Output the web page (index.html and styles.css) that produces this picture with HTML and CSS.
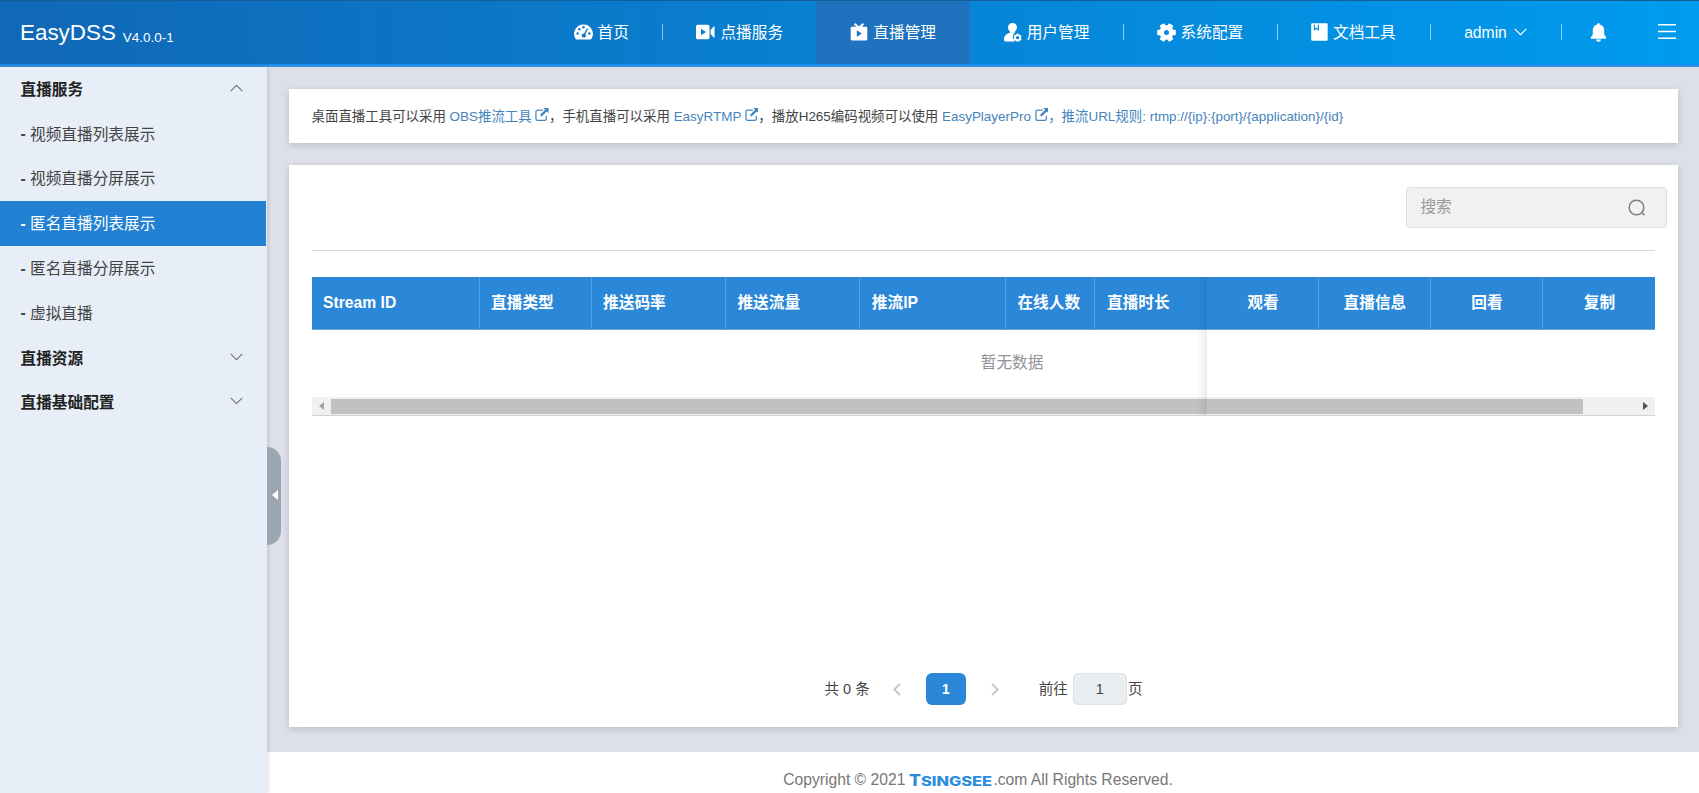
FILE: index.html
```html
<!DOCTYPE html>
<html lang="zh-CN">
    <head>
        <meta charset="utf-8">
        <title>EasyDSS</title>
        <link rel="stylesheet" href="styles.css">
    </head>

    <body>
        <div class="header">
            <div class="logo">EasyDSS<span class="logo__version">V4.0.0-1</span></div>
            <div class="nav">
                <a class="nav__item nav__item_home" href="#">
                    <svg class="icon" width="19" height="18" viewBox="0 0 19 18"><path fill="#fff" d="M9.500 1.500A9.300 9.300 0 0 0 2.100 16.500h14.800A9.300 9.300 0 0 0 9.500 1.500z"/><g fill="#0b7acd"><circle cx="3.600" cy="10.500" r="1.200"/><circle cx="5.300" cy="6.200" r="1.200"/><circle cx="9.500" cy="4.300" r="1.200"/><circle cx="15.400" cy="10.500" r="1.200"/><path d="M12.900 5.300l1.100.7-2.600 5.100a2.100 2.100 0 1 1-1.300-.7z"/></g></svg>
                    <span>首页</span>
                </a>
                <a class="nav__item" href="#">
                    <svg class="icon" width="19" height="18" viewBox="0 0 19 18"><path fill="#fff" d="M1.500 1.800h10.500q1.500 0 1.500 1.500v11.500q0 1.500-1.500 1.500H1.500q-1.500 0-1.500-1.500V3.300q0-1.500 1.500-1.500zM14.500 7l4-4.300v12.600l-4-4.300z"/><path fill="#0a7ed0" d="M5 5.800l5 3.200-5 3.200z"/></svg>
                    <span>点播服务</span>
                </a>
                <a class="nav__item nav__item_active" href="#">
                    <svg class="icon" width="18" height="18" viewBox="0 0 18 18"><path fill="none" stroke="#fff" stroke-width="2" d="M4.500.8l4.500 4 4.500-4"/><path fill="#fff" d="M2 3.800h14q1.300 0 1.300 1.300v11q0 1.300-1.300 1.300H2Q.700 17.400.700 16.100v-11Q.700 3.800 2 3.800z"/><path fill="#1f73be" d="M6.800 7.200l5 3.400-5 3.400z"/></svg>
                    <span>直播管理</span>
                </a>
                <a class="nav__item" href="#">
                    <svg class="icon" width="18" height="19" viewBox="0 0 18 19"><path fill="#fff" d="M8.500 0c3 0 4.700 2.300 4.400 5-.2 1.600-1.200 2.700-2 3.700v1.200c-1.800 1-2.300 2.600-2 4.500.2 1.400 1 2.800 2 4H1.500Q0 18.400 0 17c0-3.600 1.400-5.600 6-7.200V8.600C4.800 7.500 4 6.300 4 4.600 4 2 5.700 0 8.500 0z"/><circle cx="13.600" cy="14.700" r="2.600" fill="none" stroke="#fff" stroke-width="1.900"/><path stroke="#fff" stroke-width="1.600" d="M13.600 10.600v1.500M13.600 17.300v1.500M10 12.600l1.400.8M15.800 16l1.400.8M17.200 12.600l-1.400.8M11.400 16l-1.400.8"/></svg>
                    <span>用户管理</span>
                </a>
                <a class="nav__item nav__item_line" href="#">
                    <svg class="icon" width="19" height="19" viewBox="-9.500 -9.500 19 19"><g fill="#fff"><circle r="7.200"/><rect x="-2.700" y="-9.300" width="5.400" height="18.600" rx="1" transform="rotate(30)"/><rect x="-2.700" y="-9.300" width="5.400" height="18.600" rx="1" transform="rotate(90)"/><rect x="-2.700" y="-9.300" width="5.400" height="18.600" rx="1" transform="rotate(150)"/></g><circle r="2.500" fill="#078ade"/></svg>
                    <span>系统配置</span>
                </a>
                <a class="nav__item nav__item_line" href="#">
                    <svg class="icon" width="17" height="18" viewBox="0 0 17 18"><rect width="16.500" height="17.500" x=".2" y=".2" rx="1" fill="#fff"/><path fill="none" stroke="#0590e2" stroke-width="1.100" d="M3.400 1.500v5.300l2-1.500 2 1.500V1.500"/></svg>
                    <span>文档工具</span>
                </a>
                <a class="nav__item nav__item_line nav__item_user" href="#">
                    <span>admin</span>
                    <svg class="icon-arrow" width="13" height="8" viewBox="0 0 13 8"><path fill="none" stroke="#fff" stroke-width="1.200" d="M.7.900l5.800 5.800L12.300.9"/></svg>
                </a>
                <a class="nav__item nav__item_line nav__item_bell" href="#">
                    <svg width="17" height="19" viewBox="0 0 17 19"><path fill="#fff" d="M8.500 0q1 0 1.200 1.400c3 .6 4.500 2.800 4.500 5.600v4.500l2 3q.6 1.200-.7 1.200h-14q-1.300 0-.7-1.200l2-3V7c0-2.800 1.500-5 4.500-5.600Q7.500 0 8.500 0zM6 16.600h5a2.500 2.200 0 0 1-5 0z"/></svg>
                </a>
                <a class="nav__menu" href="#">
                    <svg width="18" height="15" viewBox="0 0 18 15"><path stroke="#fff" stroke-width="1.600" d="M0 .8h18M0 7.500h18M0 14.200h18"/></svg>
                </a>
            </div>
        </div>

        <div class="wrapper">
            <div class="sidebar">
                <div class="sidebar__title">直播服务
                    <svg class="icon-arrow" width="13" height="8" viewBox="0 0 13 8"><path fill="none" stroke="#70757c" stroke-width="1.100" d="M.7 7.100l5.800-5.800 5.800 5.800"/></svg>
                </div>
                <a class="sidebar__item" href="#"><b>-</b>视频直播列表展示</a>
                <a class="sidebar__item" href="#"><b>-</b>视频直播分屏展示</a>
                <a class="sidebar__item sidebar__item_active" href="#"><b>-</b>匿名直播列表展示</a>
                <a class="sidebar__item" href="#"><b>-</b>匿名直播分屏展示</a>
                <a class="sidebar__item" href="#"><b>-</b>虚拟直播</a>
                <div class="sidebar__title">直播资源
                    <svg class="icon-arrow" width="13" height="8" viewBox="0 0 13 8"><path fill="none" stroke="#70757c" stroke-width="1.100" d="M.7.900l5.800 5.800L12.300.9"/></svg>
                </div>
                <div class="sidebar__title">直播基础配置
                    <svg class="icon-arrow" width="13" height="8" viewBox="0 0 13 8"><path fill="none" stroke="#70757c" stroke-width="1.100" d="M.7.900l5.800 5.800L12.300.9"/></svg>
                </div>
                <div class="sidebar__toggle"></div>
            </div>

            <div class="main">
                <div class="content">
                    <div class="card tips">
                        <span>桌面直播工具可以采用 <a href="#">OBS推流工具 <svg class="icon-link" viewBox="0 0 13 13"><path fill="none" stroke="currentColor" stroke-width="1.200" d="M7.500 2H2.600Q.9 2 .9 3.700v6.600Q.9 12 2.600 12h6.600q1.700 0 1.700-1.700V7.600"/><path fill="currentColor" d="M8 0h5v5l-1.700-1.700-5 5-1.500-1.500 5-5z"/></svg></a>，手机直播可以采用 <a href="#">EasyRTMP <svg class="icon-link" viewBox="0 0 13 13"><path fill="none" stroke="currentColor" stroke-width="1.200" d="M7.500 2H2.600Q.9 2 .9 3.700v6.600Q.9 12 2.600 12h6.600q1.700 0 1.700-1.700V7.600"/><path fill="currentColor" d="M8 0h5v5l-1.700-1.700-5 5-1.500-1.500 5-5z"/></svg></a>，播放H265编码视频可以使用 <a href="#">EasyPlayerPro <svg class="icon-link" viewBox="0 0 13 13"><path fill="none" stroke="currentColor" stroke-width="1.200" d="M7.500 2H2.600Q.9 2 .9 3.700v6.600Q.9 12 2.600 12h6.600q1.700 0 1.700-1.700V7.600"/><path fill="currentColor" d="M8 0h5v5l-1.700-1.700-5 5-1.500-1.500 5-5z"/></svg>，推流URL规则: rtmp://{ip}:{port}/{application}/{id}</a></span>
                    </div>

                    <div class="card list">
                        <div class="toolbar">
                            <div class="search">
                                <input class="search__input" type="text" placeholder="搜索">
                                <svg width="18" height="18" viewBox="0 0 18 18"><path fill="none" stroke="#7d7d7d" stroke-width="1.500" d="M13.500 13.500l3 2.700M15.800 8.500a7.300 7.300 0 1 1-14.600 0 7.300 7.300 0 0 1 14.600 0z"/></svg>
                            </div>
                        </div>

                        <div class="table">
                            <div class="table__head">
                                <div>Stream ID</div>
                                <div>直播类型</div>
                                <div>推送码率</div>
                                <div>推送流量</div>
                                <div>推流IP</div>
                                <div>在线人数</div>
                                <div class="table__last">直播时长</div>
                                <div class="table__action">观看</div>
                                <div class="table__action">直播信息</div>
                                <div class="table__action">回看</div>
                                <div class="table__action table__last">复制</div>
                            </div>
                            <div class="table__empty">暂无数据</div>
                            <div class="scrollbar">
                                <span class="scrollbar__left"></span>
                                <span class="scrollbar__thumb"></span>
                                <span class="scrollbar__right"></span>
                            </div>
                            <div class="table__shadow"></div>
                        </div>

                        <div class="pager">
                            <span class="pager__text">共 0 条</span>
                            <svg class="pager__prev" width="8" height="13" viewBox="0 0 8 13"><path fill="none" stroke="#c0c4cc" stroke-width="1.800" d="M7 .9L1.300 6.500 7 12.100"/></svg>
                            <span class="pager__page">1</span>
                            <svg class="pager__next" width="8" height="13" viewBox="0 0 8 13"><path fill="none" stroke="#c0c4cc" stroke-width="1.800" d="M1 .9l5.700 5.600L1 12.100"/></svg>
                            <span class="pager__text">前往</span>
                            <input class="pager__input" type="text" value="1">
                            <span class="pager__text">页</span>
                        </div>
                    </div>
                </div>

                <div class="footer">
                    <span>Copyright © 2021</span>
                    <svg class="footer__brand" width="84" height="22" viewBox="0 0 84 22"><text class="footer__brand-first" x="0" y="16.500" textLength="12" lengthAdjust="spacingAndGlyphs">T</text><text class="footer__brand-rest" x="12" y="16.500" textLength="71" lengthAdjust="spacingAndGlyphs">SINGSEE</text></svg>
                    <span>.com All Rights Reserved.</span>
                </div>
            </div>
        </div>
    </body>
</html>
```

FILE: styles.css
```css
* {
    box-sizing: border-box;
}

body, html {
    margin: 0;
    height: 100%;
    overflow: hidden;
    font-family: "Liberation Sans", "Noto Sans CJK SC", sans-serif;
    font-size: 15.68px;
    color: #444;
}

body {
    display: flex;
    flex-direction: column;
}

a {
    color: inherit;
    text-decoration: none;
}

input {
    font-family: inherit;
    outline: none;
}

svg {
    flex: none;
}

.header {
    display: flex;
    flex: none;
    justify-content: space-between;
    height: 67px;
    padding-left: 20px;
    color: #fff;
    background: linear-gradient(to right, #1068b6, #0a7ccd 40%, #009bee);
    background-clip: padding-box;
    border-top: 1px solid #155f98;
    border-bottom: 2px solid #2c93ec;
    box-shadow: inset 0 -1px 0 #1c88e0;
}

.logo {
    line-height: 63px;
    font-size: 22.4px;
    white-space: nowrap;
}

.logo__version {
    position: relative;
    top: 2px;
    margin-left: 7px;
    font-size: 13.44px;
}

.nav {
    display: flex;
}

.nav__item {
    position: relative;
    display: flex;
    align-items: center;
    justify-content: center;
    gap: 5px;
    width: 153.4px;
    height: 63px;
    line-height: 61px;
    padding-bottom: 1px;
    white-space: nowrap;
}

.nav__item_home {
    width: 123.500px;
}

.nav__item_home::after,
.nav__item_line::before {
    content: "";
    position: absolute;
    top: 23px;
    width: 1px;
    height: 16px;
    background: rgba(255, 255, 255, 0.55);
}

.nav__item_home::after {
    right: 0;
}

.nav__item_line::before {
    left: 0;
}

.nav__item_active {
    background: #1f73be;
}

.nav__item_user {
    width: 131px;
    gap: 7px;
}

.nav__item_bell {
    width: 75px;
}

.nav__menu {
    display: flex;
    align-items: center;
    width: 63px;
    height: 60px;
    padding: 0 22px;
}

.wrapper {
    display: flex;
    flex: 1;
    min-height: 0;
}

.sidebar {
    position: relative;
    z-index: 2;
    flex: none;
    width: 267px;
    background: #e7eef7;
    box-shadow: 1px 0 4px rgba(0, 0, 0, 0.15);
}

.sidebar__title,
.sidebar__item {
    display: flex;
    align-items: center;
    height: 44.8px;
    padding-bottom: 2px;
    padding-left: 20.500px;
}

.sidebar__title {
    justify-content: space-between;
    padding-right: 24.500px;
    font-weight: bold;
    color: #222;
}

.sidebar__title .icon-arrow {
    margin-top: -1px;
}

.sidebar__item b {
    width: 9.500px;
    padding-top: 2px;
}

.sidebar__item_active {
    color: #fff;
    background: #2281d2;
    margin-right: 1px;
}

.sidebar__toggle {
    position: absolute;
    left: 267px;
    top: 380px;
    width: 14px;
    height: 98px;
    border-radius: 0 14px 14px 0;
    background: #9ca6b2;
}

.sidebar__toggle::after {
    content: "";
    position: absolute;
    left: 5px;
    top: 43px;
    border: 5px solid transparent;
    border-right: 6px solid #fff;
    border-left: 0;
}

.main {
    display: flex;
    flex: 1;
    flex-direction: column;
    min-width: 0;
}

.content {
    display: flex;
    flex: 1;
    flex-direction: column;
    gap: 22px;
    padding: 22px 21px 25px 22px;
    background: #dde0e8;
}

.card {
    background: #fff;
    box-shadow: 0 2px 7px rgba(0, 0, 0, 0.16);
}

.tips {
    display: flex;
    align-items: center;
    height: 54px;
    padding-bottom: 3px;
    padding-left: 22.500px;
    font-size: 13.44px;
    white-space: nowrap;
}

.tips a {
    color: #4484bd;
}

.icon-link {
    width: 13.500px;
    height: 13.500px;
    vertical-align: -1px;
}

.list {
    display: flex;
    flex: 1;
    flex-direction: column;
    padding: 22px 22.600px;
}

.toolbar {
    display: flex;
    justify-content: flex-end;
    height: 64px;
    border-bottom: 1px solid #d3dae2;
}

.search {
    display: flex;
    align-items: center;
    width: 261px;
    height: 41px;
    margin-right: -12px;
    padding: 0 20px 0 13px;
    border: 1px solid #dcdee2;
    border-radius: 4px;
    background: #f1f1f1;
}

.search__input {
    flex: 1;
    min-width: 0;
    padding: 0 0 1px;
    border: none;
    background: none;
    font-size: 15.68px;
}

.search__input::placeholder {
    color: #999;
}

.table {
    position: relative;
    margin-top: 26px;
    border-bottom: 1px solid #ccd3da;
}

.table__head {
    display: grid;
    grid-template-columns: 168fr 112fr 134.4fr 134.4fr 145.6fr 89.6fr 112fr 112fr 112fr 112fr 112fr;
    height: 53px;
    line-height: 52px;
    color: #fff;
    font-weight: bold;
    background: #2b87d7;
    border-bottom: 1px solid #69a3d8;
}

.table__head div {
    padding-left: 11.500px;
    border-right: 1px solid #5b9fdd;
    white-space: nowrap;
}

.table__head .table__last {
    border-right: none;
}

.table__head .table__action {
    padding: 0;
    text-align: center;
}

/* as wide as all the columns, so the text is off centre */
.table__empty {
    width: 1401px;
    height: 67px;
    line-height: 66px;
    text-align: center;
    color: #909399;
}

/* edge of the fixed columns */
.table__shadow {
    position: absolute;
    left: 885px;
    top: 0;
    bottom: 0;
    width: 10px;
    background: linear-gradient(to right, transparent, rgba(0, 0, 0, 0.08));
}

.scrollbar {
    display: flex;
    align-items: center;
    height: 18px;
    background: #f0f0f0;
}

.scrollbar__left,
.scrollbar__right {
    border: 4px solid transparent;
}

.scrollbar__left {
    margin: 0 7px;
    border-right: 5px solid #a3a3a3;
    border-left: 0;
}

.scrollbar__thumb {
    width: 1252px;
    height: 15px;
    background: #c1c1c1;
}

.scrollbar__right {
    margin-left: auto;
    margin-right: 7px;
    border-left: 5px solid #505050;
    border-right: 0;
}

.pager {
    display: flex;
    align-items: center;
    justify-content: center;
    height: 32px;
    margin-top: auto;
    font-size: 14.56px;
}

.pager__text {
    padding-bottom: 3px;
}

.pager__prev {
    margin: 0 25px 0 23px;
}

.pager__page {
    width: 40px;
    height: 32px;
    border-radius: 6px;
    line-height: 32px;
    text-align: center;
    font-weight: bold;
    color: #fff;
    background: #2b87d7;
}

.pager__next {
    margin: 0 40px 0 25px;
}

.pager__input {
    width: 54px;
    height: 32px;
    margin: 0 1px 0 5px;
    padding: 0;
    border: 1px solid #dcdfe6;
    border-radius: 5px;
    text-align: center;
    font-size: 14.56px;
    color: #444;
    background: #ebeef1;
}

.footer {
    display: flex;
    align-items: center;
    justify-content: center;
    height: 41px;
    padding: 14px 10px 0 0;
    color: #777;
    background: #fff;
}

.footer__brand {
    margin-left: 4px;
}

.footer__brand text {
    font-family: Inter, sans-serif;
    font-weight: 800;
    fill: #2b8ddd;
}

.footer__brand-first {
    font-size: 15.500px;
}

.footer__brand-rest {
    font-size: 12.500px;
}
```
